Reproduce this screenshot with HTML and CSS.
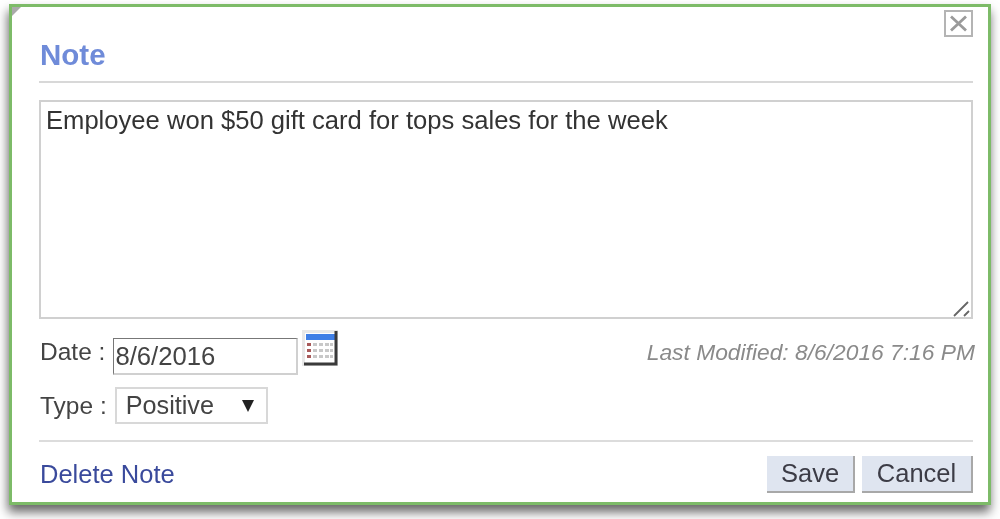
FILE: index.html
```html
<!DOCTYPE html>
<html lang="en">
<head>
<meta charset="utf-8">
<title>Note</title>
<link rel="stylesheet" href="styles.css">
</head>
<body>
<div class="dialog">
  <span class="corner"></span>
  <div class="close-row">
    <button class="close" aria-label="Close">
      <svg width="19" height="17" viewBox="0 0 19 17"><path d="M2 1.5 17 15.5M17 1.5 2 15.5" stroke="#9a9a9a" stroke-width="2.8" fill="none"/></svg>
    </button>
  </div>
  <h1 class="title">Note</h1>
  <div class="note-wrap">
    <textarea class="note" spellcheck="false">Employee won $50 gift card for tops sales for the week</textarea>
    <svg class="grip" width="18" height="16" viewBox="0 0 18 16"><path d="M1 15 15 1M11 15 16 10" stroke="#666" stroke-width="1.8" fill="none"/></svg>
  </div>
  <div class="fields">
    <div class="fields-left">
      <div class="date-row">
        <label class="label">Date :</label>
        <input class="date" value="8/6/2016">
        <svg class="cal" width="36" height="36" viewBox="0 0 36 36">
          <rect x="0" y="0" width="36" height="36" fill="#e8e8e8"/>
          <rect x="3" y="3" width="31" height="31" fill="#fff"/>
          <rect x="4" y="4" width="30" height="6" fill="#3f7fe6"/>
          <path d="M34 1V34H2" stroke="#3a3a3a" stroke-width="3" fill="none"/>
          <g fill="#c8c8c8">
            <rect x="11" y="13" width="4" height="3"/><rect x="17" y="13" width="4" height="3"/><rect x="23" y="13" width="4" height="3"/><rect x="28" y="13" width="3" height="3"/>
            <rect x="11" y="19" width="4" height="3"/><rect x="17" y="19" width="4" height="3"/><rect x="23" y="19" width="4" height="3"/><rect x="28" y="19" width="3" height="3"/>
            <rect x="11" y="25" width="4" height="3"/><rect x="17" y="25" width="4" height="3"/><rect x="23" y="25" width="4" height="3"/><rect x="28" y="25" width="3" height="3"/>
          </g>
          <g fill="#a85a5a">
            <rect x="5" y="13" width="4" height="3"/><rect x="5" y="19" width="4" height="3"/><rect x="5" y="25" width="4" height="3"/>
          </g>
        </svg>
      </div>
      <div class="type-row">
        <label class="label">Type :</label>
        <div class="select"><span>Positive</span><i class="arrow"></i></div>
      </div>
    </div>
    <div class="modified">Last Modified: 8/6/2016 7:16 PM</div>
  </div>
  <div class="footer">
    <a class="delete" href="#">Delete Note</a>
    <div class="buttons">
      <button class="btn save">Save</button>
      <button class="btn cancel">Cancel</button>
    </div>
  </div>
</div>
</body>
</html>
```
FILE: styles.css
```css
html, body { margin: 0; padding: 0; background: #fff; overflow: hidden; }
body { height: 519px; font-family: "Liberation Sans", Arial, sans-serif; color: #333; }
.dialog {
  position: relative;
  box-sizing: border-box;
  width: 982px;
  height: 501px;
  margin: 4px 0 0 9px;
  padding: 3px 15px 0 27px;
  border: 3px solid #7dbb68;
  background: #fff;
  box-shadow: -1px 7px 10px rgba(0,0,0,.6);
  filter: blur(.7px);
}
.corner {
  position: absolute; left: 0; top: 0;
  border-style: solid; border-width: 9px 9px 0 0;
  border-color: #aaa transparent transparent transparent;
}
.close-row { display: flex; justify-content: flex-end; }
.close {
  box-sizing: border-box;
  width: 29px; height: 27px; padding: 0;
  display: flex; align-items: center; justify-content: center;
  background: #fff; border: 2px solid #b4b4b4;
}
.title {
  margin: 0 0 17px;
  padding: 0 0 0 1px;
  height: 44px;
  box-sizing: content-box;
  font-size: 29.5px; line-height: 36px; font-weight: bold;
  color: #6f8bd9;
  border-bottom: 2px solid #d8d8d8;
}
.note-wrap { position: relative; }
.note {
  display: block;
  box-sizing: border-box;
  width: 934px; height: 219px;
  margin: 0;
  padding: 4px 5px;
  border: 2px solid #d0d0d0;
  font: 25.6px/28px "Liberation Sans", Arial, sans-serif;
  color: #333;
  outline: none;
  resize: none;
}
.grip { position: absolute; right: 2px; bottom: 2px; }
.fields { display: flex; justify-content: space-between; align-items: flex-start; margin-top: 11px; }
.fields-left { display: flex; flex-direction: column; padding-left: 1px; }
.date-row { display: flex; align-items: flex-start; height: 45px; }
.label { font-size: 24.5px; line-height: 44px; color: #444; }
.date {
  box-sizing: border-box;
  width: 185px; height: 37px;
  margin: 8px 0 0 8px;
  padding: 1px 0 0 1px;
  border: 2px solid #d0d0d0;
  border-top-color: #777; border-left-color: #777;
  border-top-width: 1px; border-left-width: 1px;
  font: 25.7px "Liberation Sans", Arial, sans-serif;
  color: #444;
  outline: none;
}
.cal { margin-left: 4px; display: block; }
.type-row { display: flex; align-items: center; margin-top: 12px; height: 37px; }
.select {
  box-sizing: border-box;
  width: 153px; height: 37px;
  margin-left: 8px;
  padding: 0 12px 0 9px;
  display: flex; align-items: center; justify-content: space-between;
  border: 2px solid #d8d8d8;
  font-size: 25.2px; color: #444;
}
.arrow {
  border-style: solid; border-width: 12px 6px 0 6px;
  border-color: #222 transparent transparent transparent;
}
.modified {
  font-size: 22.8px; line-height: 24px; font-style: italic; color: #8a8a8a;
  margin: 10px -2px 0 0;
}
.footer {
  display: flex; justify-content: space-between; align-items: center;
  margin-top: 16px;
  padding-top: 14px;
  border-top: 2px solid #dcdcdc;
}
.delete { font-size: 25.5px; color: #3a4a9c; text-decoration: none; margin-left: 1px; }
.buttons { display: flex; gap: 7px; }
.btn {
  box-sizing: border-box;
  height: 37px; padding: 0;
  background: #dfe5f0;
  border: 0;
  border-right: 2px solid #a8a8a8; border-bottom: 2px solid #a8a8a8;
  font: 25.5px "Liberation Sans", Arial, sans-serif;
  color: #3c3c46;
}
.save { width: 88px; }
.cancel { width: 111px; }
```
